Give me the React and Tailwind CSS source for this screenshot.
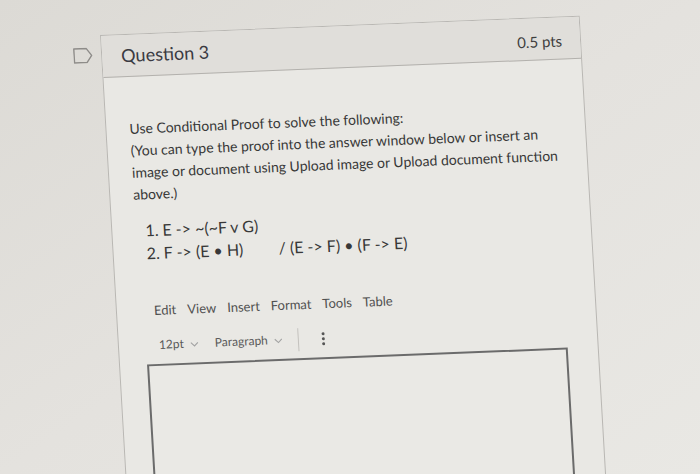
import React from 'react';

// Canvas quiz question card, photographed at a slight angle
const Chevron = () => (
  <svg width="9" height="6" viewBox="0 0 9 6" className="ml-[6px] mt-[1px]">
    <path d="M1 1 L4.5 4.5 L8 1" fill="none" stroke="#a3a3a3" strokeWidth="1.1" />
  </svg>
);

const MenuBar = () => {
  const items = ['Edit', 'View', 'Insert', 'Format', 'Tools', 'Table'];
  return (
    <div className="flex items-center gap-[11px] h-[22px] pl-[37px] text-[13px] text-[#505050]">
      {items.map((item) => (
        <span key={item}>{item}</span>
      ))}
    </div>
  );
};

const Toolbar = () => (
  <div className="flex items-center h-[24px] mt-[11px] pl-[40px] text-[12px] text-[#5a5a5a]">
    <span className="flex items-center">
      12pt
      <Chevron />
    </span>
    <span className="flex items-center ml-[16px]">
      Paragraph
      <Chevron />
    </span>
    <span className="w-px h-[23px] bg-[#c4c2be] ml-[15px]" />
    <span className="flex flex-col gap-[2px] ml-[23px]">
      <span className="w-[3px] h-[3px] rounded-full bg-[#555]" />
      <span className="w-[3px] h-[3px] rounded-full bg-[#555]" />
      <span className="w-[3px] h-[3px] rounded-full bg-[#555]" />
    </span>
  </div>
);

export default function App() {
  return (
    <div className="w-[700px] h-[474px] overflow-hidden bg-linear-to-br from-[#dcdad5] via-[#e4e2de] to-[#e9e8e4] pt-[35px] pl-[72px] font-['Lato','Liberation_Sans',sans-serif]">
      <div className="flex origin-[28px_0px] rotate-[-2.3deg] skew-x-[1deg]">
        {/* bookmark flag */}
        <div className="w-[19px] mr-[9px] pt-[12px]">
          <svg width="20" height="16" viewBox="0 0 20 16">
            <path d="M1 1 H13.5 L18.5 8 L13.5 15 H1 Z" fill="none" stroke="#8e8c89" strokeWidth="1.4" strokeLinejoin="round" />
          </svg>
        </div>

        <div className="w-[480px] border border-[#b9b7b3] bg-[#e9e8e4]">
          <div className="h-[42px] flex items-center justify-between pl-[19px] pr-[18px] bg-[#e0deda] border-b border-[#b3b1ad]">
            <span className="text-[18px] text-[#3a3a42]">Question 3</span>
            <span className="text-[15px] text-[#3f3f3f] pt-[5px]">0.5 pts</span>
          </div>

          <div className="pt-[41px] h-[480px]">
            <div className="pl-[23px] pr-[17px] text-[14px] leading-[22px] text-[#383838]">
              <p>
                Use Conditional Proof to solve the following:
                <br />
                (You can type the proof into the answer window below or insert an image or document using Upload image or Upload document function above.)
              </p>
              <div className="mt-[13px] pl-[10px] leading-[23px] text-[16px]">
                <div>1. E -&gt; ~(~F v G)</div>
                <div className="flex">
                  <span className="w-[132px]">2. F -&gt; (E • H)</span>
                  <span>/ (E -&gt; F) • (F -&gt; E)</span>
                </div>
              </div>
            </div>

            <div className="mt-[36px]">
              <MenuBar />
              <Toolbar />
              <div className="mt-[7px] ml-[27px] mr-[30px] h-[200px] border-2 border-[#6b6b6b] bg-[#eae9e5]" />
            </div>
          </div>
        </div>
      </div>
    </div>
  );
}
